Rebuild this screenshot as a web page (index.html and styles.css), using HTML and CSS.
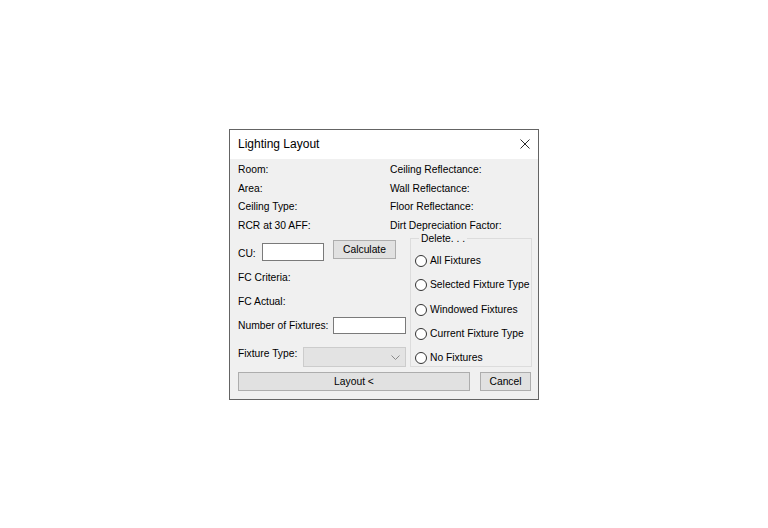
FILE: index.html
```html
<!DOCTYPE html>
<html>
<head>
<meta charset="utf-8">
<link rel="stylesheet" href="styles.css">
</head>
<body>
<div class="dialog">
  <div class="titlebar">
    <span class="title">Lighting Layout</span>
    <svg class="close" width="10" height="10" viewBox="0 0 10 10"><path d="M0.5 0.5 L9.5 9.5 M9.5 0.5 L0.5 9.5" stroke="#2b2b2b" stroke-width="1" fill="none"/></svg>
  </div>
  <div class="content">
    <div class="info">
      <span>Room:</span><span>Ceiling Reflectance:</span>
      <span>Area:</span><span>Wall Reflectance:</span>
      <span>Ceiling Type:</span><span>Floor Reflectance:</span>
      <span>RCR at 30 AFF:</span><span>Dirt Depreciation Factor:</span>
    </div>
    <div class="middle">
      <div class="leftcol">
        <div class="row row-cu">
          <span class="lbl lbl-cu">CU:</span>
          <span class="textbox tb-cu"></span>
          <span class="button btn-calc">Calculate</span>
        </div>
        <div class="row row-line">FC Criteria:</div>
        <div class="row row-line">FC Actual:</div>
        <div class="row row-num">
          <span class="lbl lbl-num">Number of Fixtures:</span>
          <span class="textbox tb-num"></span>
        </div>
        <div class="row row-type">
          <span class="lbl lbl-type">Fixture Type:</span>
          <span class="combo">
            <svg class="chev" width="9" height="5" viewBox="0 0 9 5"><path d="M0.5 0.5 L4.5 4.5 L8.5 0.5" stroke="#8a8a8a" stroke-width="1" fill="none"/></svg>
          </span>
        </div>
      </div>
      <div class="group">
        <span class="legend">Delete. . .</span>
        <div class="radios">
          <div class="radio"><span class="circle"></span><span>All Fixtures</span></div>
          <div class="radio"><span class="circle"></span><span>Selected Fixture Type</span></div>
          <div class="radio"><span class="circle"></span><span>Windowed Fixtures</span></div>
          <div class="radio"><span class="circle"></span><span>Current Fixture Type</span></div>
          <div class="radio"><span class="circle"></span><span>No Fixtures</span></div>
        </div>
      </div>
    </div>
    <div class="bottom">
      <span class="button btn-layout">Layout &lt;</span>
      <span class="button btn-cancel">Cancel</span>
    </div>
  </div>
</div>
</body>
</html>
```

FILE: styles.css
```css
html, body {
  margin: 0;
  padding: 0;
  background: #ffffff;
}
body {
  font-family: "Liberation Sans", Arial, sans-serif;
  font-size: 10.3px;
  color: #000;
  padding: 129px 0 0 229px;
}
.dialog {
  width: 310px;
  box-sizing: border-box;
  border: 1px solid #646464;
  background: #f0f0f0;
}
.titlebar {
  height: 29px;
  background: #ffffff;
  display: flex;
  align-items: center;
  justify-content: space-between;
  padding-left: 8px;
}
.title {
  font-size: 12px;
  color: #000;
  margin-top: -1px;
}
.close {
  display: block;
  margin-right: 8px;
  margin-bottom: 2px;
}
.content {
  padding: 2px 6px 8px 8px;
}
.info {
  display: grid;
  grid-template-columns: 152px auto;
  grid-auto-rows: 18.5px;
  align-items: center;
  line-height: 12px;
}
.middle {
  display: flex;
  gap: 4px;
  height: 132px;
}
.leftcol {
  width: 168px;
  display: flex;
  flex-direction: column;
}
.row {
  display: flex;
  align-items: flex-start;
}
.lbl {
  line-height: 12px;
  flex: none;
}
.row-cu { height: 31px; }
.lbl-cu { width: 24px; margin-top: 13px; }
.textbox {
  display: block;
  background: #ffffff;
  border: 1px solid #7a7a7a;
  box-sizing: border-box;
  flex: none;
}
.tb-cu { width: 62px; height: 18px; margin-top: 8px; }
.button {
  display: flex;
  align-items: center;
  justify-content: center;
  background: #e1e1e1;
  border: 1px solid #adadad;
  box-sizing: border-box;
  height: 19px;
  flex: none;
  line-height: 12px;
}
.btn-calc { width: 63px; margin-left: 9px; margin-top: 5px; }
.row-line {
  height: 24px;
  line-height: 24px;
}
.row-num { height: 24px; align-items: center; }
.lbl-num { width: 95px; }
.tb-num { width: 73px; height: 17px; margin-top: -1px; }
.row-type { height: 29px; }
.lbl-type { width: 65px; margin-top: 10px; }
.combo {
  display: flex;
  align-items: center;
  justify-content: flex-end;
  width: 103px;
  height: 20px;
  margin-top: 9px;
  box-sizing: border-box;
  background: #e3e3e3;
  border: 1px solid #cccccc;
  padding-right: 5px;
}
.chev { display: block; }
.group {
  position: relative;
  width: 122px;
  box-sizing: border-box;
  border: 1px solid #dcdcdc;
  margin-top: 3px;
  height: 129px;
  padding: 13px 0 0 4px;
}
.legend {
  position: absolute;
  left: 8px;
  top: -6px;
  padding: 0 2px;
  background: #f0f0f0;
  line-height: 12px;
}
.radios {
  display: flex;
  flex-direction: column;
  gap: 6.3px;
}
.radio {
  display: flex;
  align-items: center;
  height: 18px;
  gap: 3px;
  white-space: nowrap;
  line-height: 12px;
}
.circle {
  display: block;
  width: 12px;
  height: 12px;
  box-sizing: border-box;
  border: 1px solid #333333;
  border-radius: 50%;
  background: #ffffff;
  flex: none;
}
.bottom {
  display: flex;
  gap: 10px;
  margin-top: 5px;
}
.btn-layout { width: 232px; }
.btn-cancel { width: 51px; }
```
